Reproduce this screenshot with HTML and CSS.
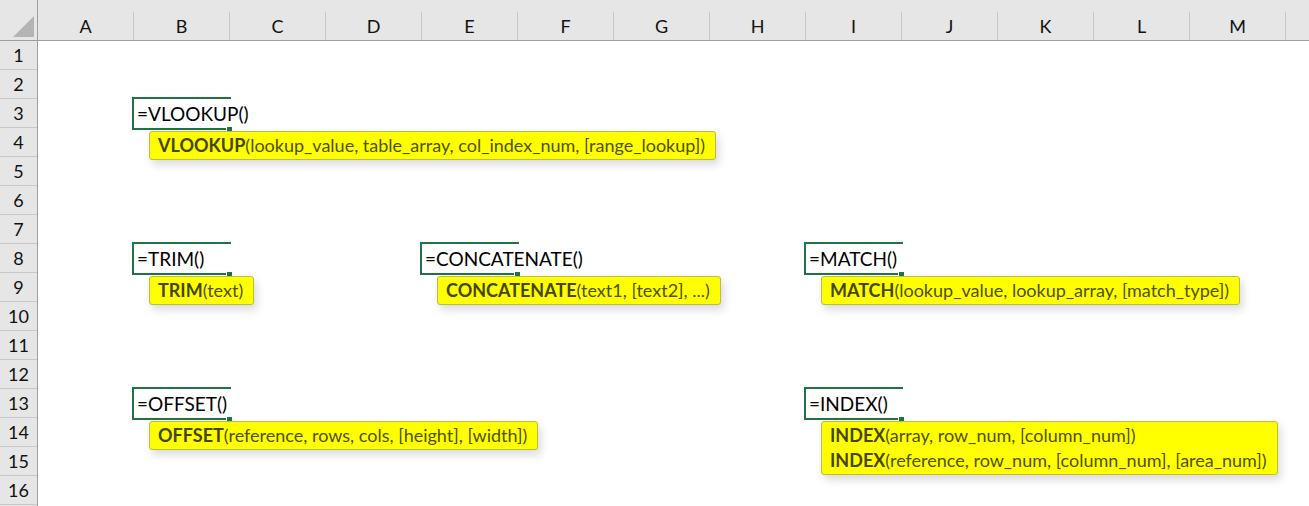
FILE: index.html
```html
<!DOCTYPE html>
<html lang="en">
<head>
<meta charset="utf-8">
<title>Excel function tooltips</title>
<link rel="stylesheet" href="styles.css">
</head>
<body>
<div class="sheet">
  <div class="header">
    <div class="corner"><span class="tri"></span></div>
    <div class="col">A</div><div class="col">B</div><div class="col">C</div><div class="col">D</div>
    <div class="col">E</div><div class="col">F</div><div class="col">G</div><div class="col">H</div>
    <div class="col">I</div><div class="col">J</div><div class="col">K</div><div class="col">L</div>
    <div class="col">M</div><div class="col rest"></div>
  </div>
  <div class="body">
    <div class="rowheads">
      <div class="rh">1</div><div class="rh">2</div><div class="rh">3</div><div class="rh">4</div>
      <div class="rh">5</div><div class="rh">6</div><div class="rh">7</div><div class="rh">8</div>
      <div class="rh">9</div><div class="rh">10</div><div class="rh">11</div><div class="rh">12</div>
      <div class="rh">13</div><div class="rh">14</div><div class="rh">15</div><div class="rh">16</div>
    </div>
    <div class="cells">
      <div class="fcell at-b3">
        <span class="ftext">=VLOOKUP()</span>
        <span class="handle"></span>
        <div class="tip"><b>VLOOKUP</b>(lookup_value, table_array, col_index_num, [range_lookup])</div>
      </div>
      <div class="fcell at-b8">
        <span class="ftext">=TRIM()</span>
        <span class="handle"></span>
        <div class="tip"><b>TRIM</b>(text)</div>
      </div>
      <div class="fcell at-e8">
        <span class="ftext">=CONCATENATE()</span>
        <span class="handle"></span>
        <div class="tip"><b>CONCATENATE</b>(text1, [text2], ...)</div>
      </div>
      <div class="fcell at-i8">
        <span class="ftext">=MATCH()</span>
        <span class="handle"></span>
        <div class="tip"><b>MATCH</b>(lookup_value, lookup_array, [match_type])</div>
      </div>
      <div class="fcell at-b13">
        <span class="ftext">=OFFSET()</span>
        <span class="handle"></span>
        <div class="tip"><b>OFFSET</b>(reference, rows, cols, [height], [width])</div>
      </div>
      <div class="fcell at-i13">
        <span class="ftext">=INDEX()</span>
        <span class="handle"></span>
        <div class="tip multi">
          <div><b>INDEX</b>(array, row_num, [column_num])</div>
          <div><b>INDEX</b>(reference, row_num, [column_num], [area_num])</div>
        </div>
      </div>
    </div>
  </div>
</div>
</body>
</html>
```
FILE: styles.css
```css
* { box-sizing: border-box; }
html, body {
  margin: 0;
  padding: 0;
  background: #ffffff;
  overflow: hidden;
}
body {
  font-family: "Lato", "Liberation Sans", sans-serif;
  font-size: 18px;
  color: #000;
}
.sheet {
  display: flex;
  flex-direction: column;
  width: 1309px;
  height: 506px;
}
.header {
  display: flex;
  height: 41px;
  background: #e6e6e6;
  border-bottom: 1px solid #9e9e9e;
  padding-top: 12px;
  flex: none;
}
.corner {
  width: 38px;
  margin-top: -12px;
  border-right: 1px solid #9e9e9e;
  display: flex;
  align-items: flex-end;
  justify-content: flex-end;
  padding: 0 3px 3px 0;
  flex: none;
}
.tri {
  width: 21px;
  height: 21px;
  background: #b4b4b4;
  clip-path: polygon(100% 0, 100% 100%, 0 100%);
}
.col {
  width: 96px;
  flex: none;
  border-right: 1px solid #c8c8c8;
  display: flex;
  align-items: center;
  justify-content: center;
  padding-bottom: 1px;
  color: #111;
}
.col.rest {
  flex: 1;
  border-right: none;
}
.body {
  display: flex;
  flex: 1;
  overflow: hidden;
}
.rowheads {
  width: 38px;
  flex: none;
  background: #e6e6e6;
  border-right: 1px solid #9e9e9e;
  display: flex;
  flex-direction: column;
}
.rh {
  height: 29px;
  flex: none;
  border-bottom: 1px solid #c8c8c8;
  display: flex;
  align-items: center;
  justify-content: center;
  color: #111;
}
.cells {
  flex: 1;
  display: grid;
  grid-template-columns: repeat(13, 96px) 1fr;
  grid-template-rows: repeat(17, 29px);
}
.at-b3  { grid-column: 2; grid-row: 3; }
.at-b8  { grid-column: 2; grid-row: 8; }
.at-e8  { grid-column: 5; grid-row: 8; }
.at-i8  { grid-column: 9; grid-row: 8; }
.at-b13 { grid-column: 2; grid-row: 13; }
.at-i13 { grid-column: 9; grid-row: 13; }

.fcell {
  position: relative;
  white-space: nowrap;
  z-index: 1;
}
.fcell::before {
  content: "";
  position: absolute;
  left: -2px;
  top: -2px;
  bottom: -2px;
  right: -1px;
  border: 2px solid #217346;
  border-right: none;
}
.ftext {
  position: relative;
  display: block;
  padding: 1px 0 0 3px;
  font-size: 19px;
  line-height: 28px;
  height: 28px;
  color: #000;
}
.handle {
  position: absolute;
  right: -2px;
  bottom: -4px;
  width: 6px;
  height: 6px;
  background: #217346;
  border-left: 1px solid #fff;
  border-top: 1px solid #fff;
}
.tip {
  position: absolute;
  left: 15px;
  top: 32px;
  background: #ffff00;
  border: 1px solid #bdbd3c;
  border-radius: 3px;
  box-shadow: 3px 5px 9px rgba(0, 0, 0, 0.14);
  padding: 0 10px 0 8px;
  font-size: 18px;
  line-height: 27px;
  color: #505000;
  white-space: nowrap;
  z-index: 2;
}
.tip b {
  font-weight: 700;
  color: #454500;
}
.tip.multi {
  line-height: 25px;
  padding-top: 1px;
  padding-bottom: 1px;
}
```
